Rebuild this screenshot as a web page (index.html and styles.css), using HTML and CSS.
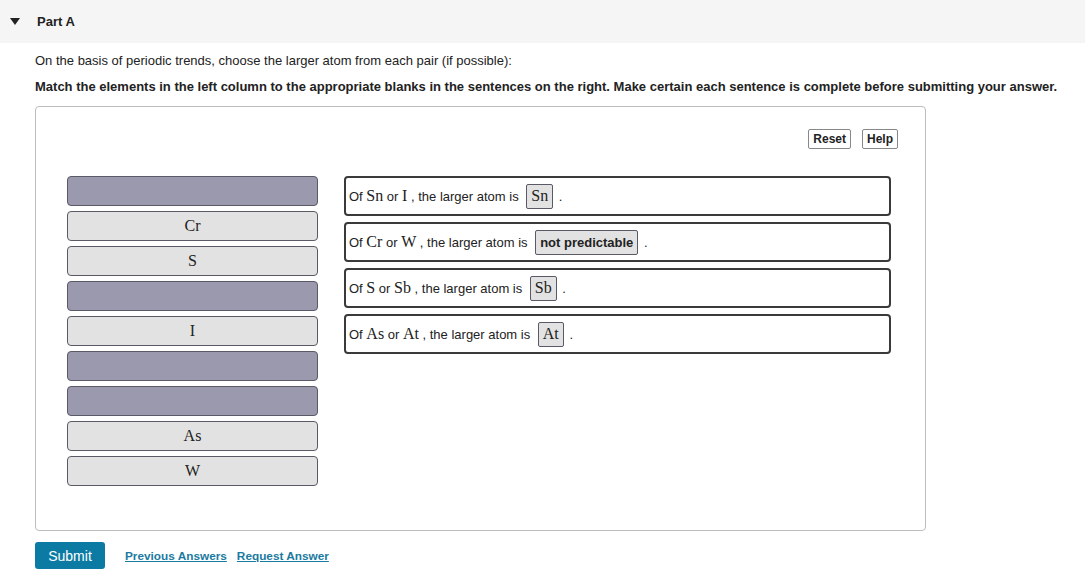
FILE: index.html
```html
<!DOCTYPE html>
<html lang="en">
<head>
    <meta charset="UTF-8">
    <title>Part A</title>
    <link rel="stylesheet" href="styles.css">
</head>
<body>
    <header class="part-header">
        <svg class="caret" width="10" height="7" viewBox="0 0 10 7"><path d="M0 0 L10 0 L5 7 Z" fill="#222"/></svg>
        <span class="part-title">Part A</span>
    </header>

    <main class="part-body">
        <p class="intro">On the basis of periodic trends, choose the larger atom from each pair (if possible):</p>
        <p class="instructions">Match the elements in the left column to the appropriate blanks in the sentences on the right. Make certain each sentence is complete before submitting your answer.</p>

        <section class="answer-box">
            <div class="toolbar">
                <button class="tool-btn">Reset</button>
                <button class="tool-btn">Help</button>
            </div>

            <div class="match-area">
                <!-- draggable elements -->
                <div class="source-list">
                    <div class="chip empty"></div>
                    <div class="chip"><span class="mi">Cr</span></div>
                    <div class="chip"><span class="mi">S</span></div>
                    <div class="chip empty"></div>
                    <div class="chip"><span class="mi">I</span></div>
                    <div class="chip empty"></div>
                    <div class="chip empty"></div>
                    <div class="chip"><span class="mi">As</span></div>
                    <div class="chip"><span class="mi">W</span></div>
                </div>

                <!-- sentences with blanks -->
                <div class="sentence-list">
                    <div class="sentence">Of <span class="mi">Sn</span> or <span class="mi">I</span> , the larger atom is <span class="blank"><span class="mi">Sn</span></span> .</div>
                    <div class="sentence">Of <span class="mi">Cr</span> or <span class="mi">W</span> , the larger atom is <span class="blank text">not predictable</span> .</div>
                    <div class="sentence">Of <span class="mi">S</span> or <span class="mi">Sb</span> , the larger atom is <span class="blank"><span class="mi">Sb</span></span> .</div>
                    <div class="sentence">Of <span class="mi">As</span> or <span class="mi">At</span> , the larger atom is <span class="blank"><span class="mi">At</span></span> .</div>
                </div>
            </div>
        </section>

        <div class="actions">
            <button class="submit-btn">Submit</button>
            <a href="#" class="link">Previous Answers</a>
            <a href="#" class="link">Request Answer</a>
        </div>
    </main>
</body>
</html>
```

FILE: styles.css
```css
* {
    margin: 0;
    padding: 0;
    box-sizing: border-box;
}

body {
    font-family: 'Liberation Sans', Arial, sans-serif;
    color: #222;
    background: #fff;
}

.part-header {
    height: 43px;
    background-color: #f5f5f5;
    display: flex;
    align-items: center;
    padding-left: 10px;
}

.caret {
    display: block;
}

.part-title {
    margin-left: 17px;
    font-size: 13px;
    font-weight: bold;
}

.part-body {
    padding: 0 35px;
}

.intro {
    font-size: 13px;
    line-height: 16px;
    margin-top: 10px;
}

.instructions {
    font-size: 13px;
    font-weight: bold;
    line-height: 16px;
    margin-top: 10px;
    white-space: nowrap;
}

.answer-box {
    width: 891px;
    height: 425px;
    margin-top: 11px;
    border: 1px solid #bdbdbd;
    border-radius: 4px;
    padding: 22px 27px 0 31px;
}

.toolbar {
    display: flex;
    justify-content: flex-end;
    gap: 11px;
}

.tool-btn {
    font-family: inherit;
    font-size: 12px;
    font-weight: bold;
    color: #222;
    background: #fff;
    border: 1px solid #888;
    border-radius: 2px;
    height: 20px;
    padding: 0 4px;
}

.match-area {
    display: flex;
    gap: 26px;
    margin-top: 27px;
}

.source-list {
    width: 251px;
    display: flex;
    flex-direction: column;
    gap: 5px;
}

.chip {
    height: 30px;
    background: #e2e2e2;
    border: 1.5px solid #5a5a66;
    border-radius: 4px;
    display: flex;
    align-items: center;
    justify-content: center;
}

.chip.empty {
    background: #9b99ad;
}

.mi {
    font-family: 'Liberation Serif', 'Times New Roman', serif;
    font-size: 16px;
}

.sentence-list {
    width: 547px;
    display: flex;
    flex-direction: column;
    gap: 6px;
}

.sentence {
    height: 40px;
    border: 2px solid #3a3a3a;
    border-radius: 4px;
    display: flex;
    align-items: center;
    padding-left: 3px;
    font-size: 13px;
    white-space: pre;
}

.blank {
    display: inline-flex;
    align-items: center;
    height: 25px;
    padding: 0 4px;
    background: #e2e2e2;
    border: 1.5px solid #5a5a66;
    border-radius: 2px;
    margin: 0 2px 0 4px;
}

.blank.text {
    font-weight: bold;
    font-size: 13px;
}

.actions {
    display: flex;
    align-items: center;
    margin-top: 11px;
}

.submit-btn {
    width: 70px;
    height: 27px;
    background: #0b7ba3;
    color: #fff;
    border: none;
    border-radius: 3px;
    font-family: inherit;
    font-size: 14px;
    margin-right: 20px;
}

.link {
    font-size: 11.8px;
    font-weight: bold;
    color: #1a7aa0;
    margin-right: 10px;
}
```
